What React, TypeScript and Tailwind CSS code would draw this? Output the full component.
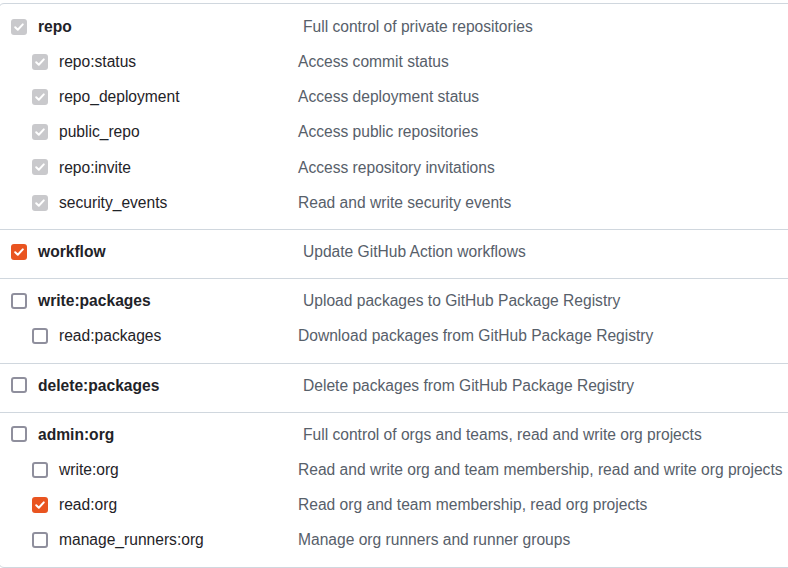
const groups = [
  {
    parent: { name: "repo", desc: "Full control of private repositories", state: "disabled" },
    children: [
      { name: "repo:status", desc: "Access commit status", state: "disabled" },
      { name: "repo_deployment", desc: "Access deployment status", state: "disabled" },
      { name: "public_repo", desc: "Access public repositories", state: "disabled" },
      { name: "repo:invite", desc: "Access repository invitations", state: "disabled" },
      { name: "security_events", desc: "Read and write security events", state: "disabled" },
    ],
  },
  {
    parent: { name: "workflow", desc: "Update GitHub Action workflows", state: "checked" },
    children: [],
  },
  {
    parent: { name: "write:packages", desc: "Upload packages to GitHub Package Registry", state: "off" },
    children: [{ name: "read:packages", desc: "Download packages from GitHub Package Registry", state: "off" }],
  },
  {
    parent: { name: "delete:packages", desc: "Delete packages from GitHub Package Registry", state: "off" },
    children: [],
  },
  {
    parent: { name: "admin:org", desc: "Full control of orgs and teams, read and write org projects", state: "off" },
    children: [
      { name: "write:org", desc: "Read and write org and team membership, read and write org projects", state: "off" },
      { name: "read:org", desc: "Read org and team membership, read org projects", state: "checked" },
      { name: "manage_runners:org", desc: "Manage org runners and runner groups", state: "off" },
    ],
  },
];

function Box({ state }: { state: string }) {
  if (state === "off") {
    return <span className="w-4 h-4 shrink-0 rounded-[3px] border-2 border-[#8f8f9d] bg-white" />;
  }
  const bg = state === "checked" ? "bg-[#e95420]" : "bg-[#c9c9cc]";
  return (
    <span className={`w-4 h-4 shrink-0 rounded-[3px] flex items-center justify-center ${bg}`}>
      <svg width="12" height="12" viewBox="0 0 12 12" fill="none">
        <path d="M2.2 6.3 L4.8 8.8 L9.8 3.4" stroke="white" strokeWidth="2" strokeLinecap="round" strokeLinejoin="round" />
      </svg>
    </span>
  );
}

export default function App() {
  return (
    <div className="w-[788px] h-[568px] overflow-hidden bg-white pt-[3px]" style={{ fontFamily: '"Liberation Sans", Arial, sans-serif' }}>
      <div className="-ml-[2px] w-[796px] border border-[#d0d7de] rounded-md">
        {groups.map((g, i) => (
          <div key={g.parent.name} className={`pb-[9px] ${i > 0 ? "pt-1 border-t border-[#d0d7de]" : "pt-[5px]"}`}>
            <div className={`h-[35.2px] flex items-center ${i === 0 ? "pt-px" : ""}`}>
              <div className="w-[304px] pl-[12px] flex items-center">
                <Box state={g.parent.state} />
                <span className="ml-[11px] text-[15.6px] font-bold text-[#1f2328]">{g.parent.name}</span>
              </div>
              <span className="text-[15.6px] text-[#57606a] whitespace-nowrap">{g.parent.desc}</span>
            </div>
            {g.children.map((c) => (
              <div key={c.name} className="h-[35.2px] flex items-center">
                <div className="w-[299px] pl-[33px] flex items-center">
                  <Box state={c.state} />
                  <span className="ml-[11px] text-[15.6px] text-[#1f2328]">{c.name}</span>
                </div>
                <span className="text-[15.6px] text-[#57606a] whitespace-nowrap">{c.desc}</span>
              </div>
            ))}
          </div>
        ))}
      </div>
    </div>
  );
}
